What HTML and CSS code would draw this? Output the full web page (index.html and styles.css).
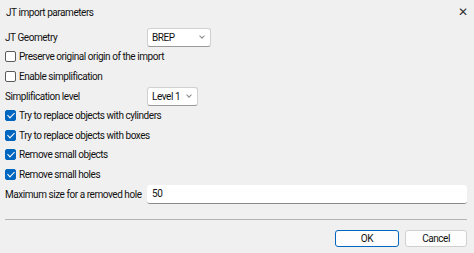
FILE: index.html
```html
<!DOCTYPE html>
<html lang="en">
<head>
    <meta charset="UTF-8">
    <title>JT import parameters</title>
    <link rel="stylesheet" href="styles.css">
</head>
<body>
    <div class="dialog">
        <div class="titlebar">
            <span class="title">JT import parameters</span>
            <span class="close">&#x2715;</span>
        </div>

        <div class="content">
            <div class="row">
                <span class="label">JT Geometry</span>
                <div class="select wide">BREP <span class="chev"></span></div>
            </div>
            <div class="check"><span class="box"></span>Preserve original origin of the import</div>
            <div class="check"><span class="box"></span>Enable simplification</div>
            <div class="row">
                <span class="label">Simplification level</span>
                <div class="select narrow">Level 1 <span class="chev"></span></div>
            </div>
            <div class="check"><span class="box on"></span>Try to replace objects with cylinders</div>
            <div class="check"><span class="box on"></span>Try to replace objects with boxes</div>
            <div class="check"><span class="box on"></span>Remove small objects</div>
            <div class="check"><span class="box on"></span>Remove small holes</div>
            <div class="row">
                <span class="label">Maximum size for a removed hole</span>
                <div class="input">50</div>
            </div>
        </div>

        <div class="separator"></div>

        <div class="buttons">
            <button class="btn default">OK</button>
            <button class="btn">Cancel</button>
        </div>
    </div>
</body>
</html>
```

FILE: styles.css
```css
html, body {
    margin: 0;
    padding: 0;
}
body {
    font-family: Roboto, "Noto Sans", sans-serif;
    font-size: 10px;
    letter-spacing: -0.45px;
    color: #111;
    background: #f0f0f0;
}
.dialog {
    width: 474px;
    height: 253px;
    box-sizing: border-box;
    background: #f0f0f0;
    display: flex;
    flex-direction: column;
}
.titlebar {
    height: 24px;
    display: flex;
    align-items: center;
    justify-content: space-between;
    padding: 0 6px 0 6px;
}
.close {
    font-size: 12px;
    color: #333;
    letter-spacing: 0;
}
.content {
    padding: 3px 7px 0 5px;
}
.row {
    display: flex;
    align-items: center;
    height: 20px;
    white-space: nowrap;
}
.label {
    width: 142px;
    flex-shrink: 0;
}
.check {
    display: flex;
    align-items: center;
    height: 19.5px;
    white-space: nowrap;
}
.box {
    width: 11px;
    height: 11px;
    border: 1px solid #5a5a5a;
    border-radius: 2px;
    background: #fff;
    margin-right: 3px;
    box-sizing: border-box;
    position: relative;
    flex-shrink: 0;
}
.box.on {
    background: #0067c0;
    border-color: #0067c0;
}
.box.on::after {
    content: "";
    position: absolute;
    left: 3px;
    top: 0px;
    width: 3px;
    height: 6px;
    border: solid #fff;
    border-width: 0 1.5px 1.5px 0;
    transform: rotate(45deg);
}
.select {
    height: 19px;
    box-sizing: border-box;
    border: 1px solid #d0d0d0;
    border-bottom-color: #9a9a9a;
    border-radius: 3px;
    background: #fff;
    display: flex;
    align-items: center;
    justify-content: space-between;
    padding: 0 6px 0 4px;
}
.select.wide {
    width: 64px;
}
.select.narrow {
    width: 51px;
}
.chev {
    width: 3px;
    height: 3px;
    border: solid #888;
    border-width: 0 1px 1px 0;
    transform: rotate(45deg);
    margin-top: -2px;
}
.input {
    flex: 1;
    height: 19px;
    box-sizing: border-box;
    background: #fff;
    border-bottom: 1px solid #8a8a8a;
    border-radius: 3px;
    padding: 0 5px;
    display: flex;
    align-items: center;
}
.separator {
    margin: 15px 7px 0 5px;
    height: 1px;
    background: #b4b4b4;
}
.buttons {
    display: flex;
    justify-content: flex-end;
    gap: 6px;
    padding: 10px 7px 0 0;
}
.btn {
    font-family: inherit;
    font-size: 10px;
    letter-spacing: -0.45px;
    color: #111;
    height: 17px;
    width: 62px;
    padding: 0;
    background: #fdfdfd;
    border: 1px solid #d0d0d0;
    border-radius: 3px;
}
.btn.default {
    width: 64px;
    border-color: #0067c0;
}
```
